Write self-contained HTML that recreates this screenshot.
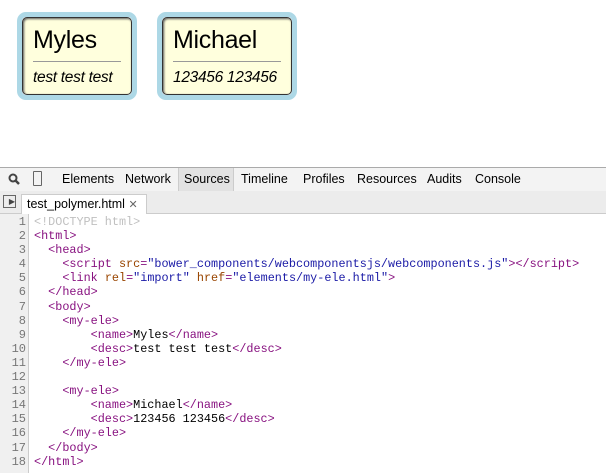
<!DOCTYPE html>
<html><head><style>
body{margin:0;width:606px;height:473px;background:#fff;position:relative;overflow:hidden;font-family:"Liberation Sans",sans-serif}
.card{position:absolute;top:12px;height:78px;border:5px solid #add8e6;border-radius:9px;}
.in{position:absolute;inset:0;box-sizing:border-box;border:1px solid #333;border-radius:5px;background:#ffffdd;box-shadow:inset 1px 1px 2px #555;padding:0 0 0 10px;white-space:nowrap;overflow:hidden}
.n{font-size:25px;margin-top:8px;line-height:28px;letter-spacing:-0.3px}
.hr{height:1px;background:#999;margin:7px 10px 0 0}
.d{font-size:15.5px;font-style:italic;margin-top:7px;letter-spacing:-0.3px}
#tb{position:absolute;top:167px;left:0;right:0;height:23px;background:#f3f3f3;border-top:1px solid #aaa;border-bottom:1px solid #ccc;font-size:12.5px}
#tb span{position:absolute;top:4px}
#tabs{position:absolute;top:191px;left:0;right:0;height:22px;background:#ececec;border-bottom:1px solid #ccc}
#code{position:absolute;top:214px;left:0;right:0;bottom:0;font:11.8px/14.1px "Liberation Mono",monospace}
#g{position:absolute;left:0;top:0;bottom:0;width:28px;background:#f0f0f0;border-right:1px solid #ccc;text-align:right;color:#777;padding-top:1px;font-size:12px}
#g div{padding-right:2px}
#c{position:absolute;left:34px;top:1px;white-space:pre}
.t{color:#881280}.a{color:#994500}.v{color:#1a1aa6}.x{color:#c0c0c0}
</style></head><body>
<div class="card" style="left:17px;width:110px"><div class="in"><div class="n">Myles</div><div class="hr"></div><div class="d">test test test</div></div></div>
<div class="card" style="left:157px;width:130px"><div class="in"><div class="n">Michael</div><div class="hr"></div><div class="d">123456 123456</div></div></div>
<div id="tb">
<svg style="position:absolute;left:8px;top:5px" width="13" height="13"><circle cx="5" cy="5" r="3.5" stroke="#444" stroke-width="2" fill="none"/><path d="M7.5 7.5L11 11" stroke="#444" stroke-width="2.5"/></svg>
<div style="position:absolute;left:33px;top:3px;width:7px;height:13px;border:1px solid #666;border-radius:1px"></div>
<span style="left:62px">Elements</span><span style="left:125px">Network</span>
<div style="position:absolute;left:178px;top:0;width:54px;height:23px;background:#e2e2e2;border-left:1px solid #ccc;border-right:1px solid #ccc"></div>
<span style="left:184px">Sources</span><span style="left:241px">Timeline</span><span style="left:303px">Profiles</span><span style="left:357px">Resources</span><span style="left:427px">Audits</span><span style="left:475px">Console</span>
</div>
<div id="tabs">
<div style="position:absolute;left:3px;top:4px;width:11px;height:11px;border:1px solid #666;font-size:8px;line-height:11px;text-align:right;color:#444">&#9654;</div>
<div style="position:absolute;left:21px;top:3px;width:126px;height:20px;background:#fff;border:1px solid #ccc;border-bottom:none;font-size:12.5px;line-height:19px;padding-left:5px;box-sizing:border-box">test_polymer.html <span style="color:#666;font-size:11px">✕</span></div>
</div>
<div id="code"><div id="g"><div>1</div><div>2</div><div>3</div><div>4</div><div>5</div><div>6</div><div>7</div><div>8</div><div>9</div><div>10</div><div>11</div><div>12</div><div>13</div><div>14</div><div>15</div><div>16</div><div>17</div><div>18</div></div>
<div id="c"><span class="x">&lt;!DOCTYPE html&gt;</span>
<span class="t">&lt;html&gt;</span>
  <span class="t">&lt;head&gt;</span>
    <span class="t">&lt;script <span class="a">src</span>=<span class="v">"bower_components/webcomponentsjs/webcomponents.js"</span>&gt;&lt;/script&gt;</span>
    <span class="t">&lt;link <span class="a">rel</span>=<span class="v">"import"</span> <span class="a">href</span>=<span class="v">"elements/my-ele.html"</span>&gt;</span>
  <span class="t">&lt;/head&gt;</span>
  <span class="t">&lt;body&gt;</span>
    <span class="t">&lt;my-ele&gt;</span>
        <span class="t">&lt;name&gt;</span>Myles<span class="t">&lt;/name&gt;</span>
        <span class="t">&lt;desc&gt;</span>test test test<span class="t">&lt;/desc&gt;</span>
    <span class="t">&lt;/my-ele&gt;</span>

    <span class="t">&lt;my-ele&gt;</span>
        <span class="t">&lt;name&gt;</span>Michael<span class="t">&lt;/name&gt;</span>
        <span class="t">&lt;desc&gt;</span>123456 123456<span class="t">&lt;/desc&gt;</span>
    <span class="t">&lt;/my-ele&gt;</span>
  <span class="t">&lt;/body&gt;</span>
<span class="t">&lt;/html&gt;</span></div></div>
</body></html>
